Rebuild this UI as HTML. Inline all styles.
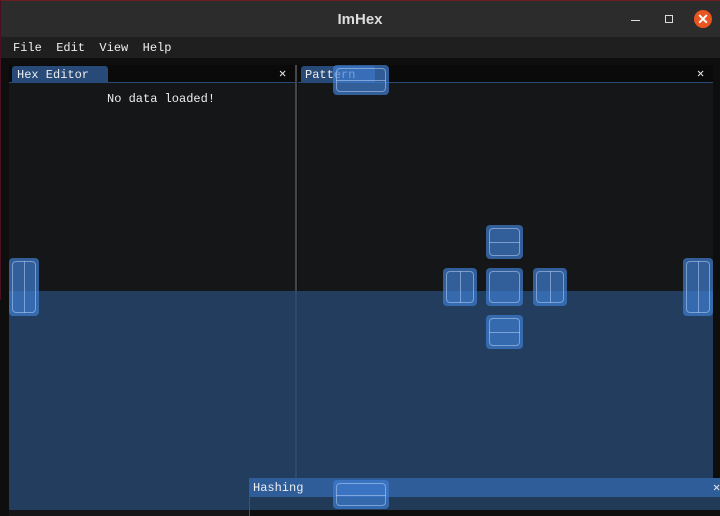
<!DOCTYPE html>
<html><head><style>
*{margin:0;padding:0;box-sizing:border-box}
body{width:720px;height:516px;overflow:hidden;background:#0e0e0e;position:relative;font-family:"Liberation Mono",monospace;color:#eee}
.a{position:absolute}
.t{font-size:12px;line-height:1}
.dt{position:absolute;background:rgba(62,125,210,0.7);border-radius:4px}
.dt i{position:absolute;left:3px;top:3px;right:3px;bottom:3px;border:1px solid rgba(170,200,240,0.6);border-radius:4px}
.h::after{content:"";position:absolute;left:3px;right:3px;top:50%;height:1px;background:rgba(170,200,240,0.6)}
.v::after{content:"";position:absolute;top:3px;bottom:3px;left:50%;width:1px;background:rgba(170,200,240,0.6)}
</style></head><body>
<div class="a" style="left:0;top:0;width:720px;height:37px;background:#2c2c2c;border-top:1px solid #6a1e22"></div>
<div class="a" style="left:0;top:11px;width:720px;text-align:center;font:bold 15px 'Liberation Sans',sans-serif;color:#ddd">ImHex</div>
<div class="a" style="left:631px;top:20px;width:9px;height:1px;background:#ddd"></div>
<div class="a" style="left:665px;top:15px;width:8px;height:8px;border:1px solid #ddd"></div>
<div class="a" style="left:694px;top:10px;width:18px;height:18px;border-radius:50%;background:#e95420;color:#fff;font:bold 14px 'Liberation Sans',sans-serif;text-align:center;line-height:18px">✕</div>
<div class="a" style="left:0;top:37px;width:720px;height:21px;background:#1f1f1f"></div>
<div class="a t" style="left:13px;top:42px;white-space:pre">File  Edit  View  Help</div>
<div class="a" style="left:0;top:0;width:1px;height:300px;background:#4a1020"></div>

<div class="a" style="left:9px;top:65px;width:286px;height:451px;background:#151617"></div>
<div class="a" style="left:9px;top:65px;width:286px;height:18px;background:#0a0a0a;border-bottom:1px solid #2b4c77"></div>
<div class="a" style="left:12px;top:66px;width:96px;height:17px;background:#284a78;border-radius:3px 3px 0 0"></div>
<div class="a t" style="left:17px;top:69px">Hex Editor</div>
<div class="a t" style="left:279px;top:68px">✕</div>
<div class="a t" style="left:107px;top:93px">No data loaded!</div>
<div class="a" style="left:295px;top:65px;width:2px;height:451px;background:#45464a"></div>

<div class="a" style="left:298px;top:65px;width:415px;height:451px;background:#151617"></div>
<div class="a" style="left:298px;top:65px;width:415px;height:18px;background:#0a0a0a;border-bottom:1px solid #2b4c77"></div>
<div class="a" style="left:301px;top:66px;width:74px;height:17px;background:#284a78;border-radius:3px 3px 0 0"></div>
<div class="a t" style="left:305px;top:69px">Pattern</div>
<div class="a t" style="left:697px;top:68px">✕</div>

<div class="a" style="left:9px;top:291px;width:704px;height:219px;background:rgba(40,75,120,0.75)"></div>

<div class="a" style="left:249px;top:478px;width:471px;height:38px;background:#213a57;border-left:1px solid #3c5270"></div>
<div class="a" style="left:249px;top:478px;width:471px;height:19px;background:#2f5d99"></div>
<div class="a t" style="left:253px;top:482px">Hashing</div>
<div class="a t" style="left:713px;top:482px">✕</div>
<div class="a" style="left:249px;top:510px;width:471px;height:6px;background:#0e0e0e;border-left:1px solid #3c5270"></div>

<div class="dt h" style="left:333px;top:65px;width:56px;height:30px"><i></i></div>
<div class="dt h" style="left:333px;top:480px;width:56px;height:29px"><i></i></div>
<div class="dt h" style="left:486px;top:225px;width:37px;height:34px"><i></i></div>
<div class="dt" style="left:486px;top:268px;width:37px;height:38px"><i></i></div>
<div class="dt v" style="left:443px;top:268px;width:34px;height:38px"><i></i></div>
<div class="dt v" style="left:533px;top:268px;width:34px;height:38px"><i></i></div>
<div class="dt h" style="left:486px;top:315px;width:37px;height:34px"><i></i></div>
<div class="dt v" style="left:683px;top:258px;width:30px;height:58px"><i></i></div>
<div class="dt v" style="left:9px;top:258px;width:30px;height:58px"><i></i></div>
</body></html>
